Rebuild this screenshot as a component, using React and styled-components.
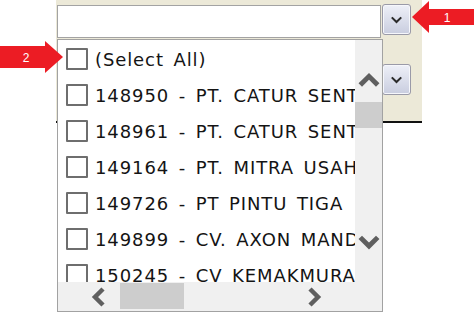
import React from 'react'
import styled, { createGlobalStyle } from 'styled-components'

const GlobalStyle = createGlobalStyle`
  html, body { margin: 0; padding: 0; background: #fff; }
  body { width: 474px; height: 318px; overflow: hidden; font-family: "DejaVu Sans", Verdana, sans-serif; }
`;

const items = [
    '(Select All)',
    '148950 - PT. CATUR SENTOSA',
    '148961 - PT. CATUR SENTOSA',
    '149164 - PT. MITRA USAHA',
    '149726 - PT PINTU TIGA',
    '149899 - CV. AXON MANDIRI',
    '150245 - CV KEMAKMURAN',
];

function Chevron({ dir = 'down', size = 22, color = '#5f5f5f', width = 4 }) {
    const pts = {
        down: '3,4 11,12 19,4',
        up: '3,12 11,4 19,12',
        left: '12,3 4,11 12,19',
        right: '4,3 12,11 4,19',
    }[dir];
    const vertical = dir === 'up' || dir === 'down';
    return (
        <svg width={vertical ? size : size * 16 / 22}
            height={vertical ? size * 16 / 22 : size}
            viewBox={vertical ? '0 0 22 16' : '0 0 16 22'}>
            <polyline points={pts} fill="none" stroke={color} strokeWidth={width} strokeLinejoin="miter" />
        </svg>
    );
}

function RedArrow({ dir, label }) {
    if (dir === 'left') {
        return (
            <ArrowOne width="62" height="33" viewBox="0 0 62 33">
                <polygon points="0,16 17,0 17,8 62,8 62,24 17,24 17,32" fill="#ec1c24" />
                <text x="35" y="21" fill="#fff" fontSize="12" fontFamily="Liberation Sans, sans-serif" textAnchor="middle">{label}</text>
            </ArrowOne>
        );
    }
    return (
        <ArrowTwo width="64" height="33" viewBox="0 0 64 33">
            <polygon points="0,5 45,5 45,0 63,16 45,32 45,27 0,27" fill="#ec1c24" />
            <text x="26" y="21" fill="#fff" fontSize="12" fontFamily="Liberation Sans, sans-serif" textAnchor="middle">{label}</text>
        </ArrowTwo>
    );
}

export default function App() {
    return (
        <Page>
            <GlobalStyle />
            <Panel>
                <FieldRow>
                    <TextBox />
                    <DropButton><Chevron dir="down" size={13} color="#2b2b2b" width={3.5} /></DropButton>
                </FieldRow>
                <FieldRow>
                    <TextBox />
                    <DropButton><Chevron dir="down" size={13} color="#2b2b2b" width={3.5} /></DropButton>
                </FieldRow>
            </Panel>

            <ListPopup>
                <ListBody>
                    <ListContent>
                        {items.map((item, i) => (
                            <ListItem key={i}>
                                <CheckBox />
                                <ItemText>{item}</ItemText>
                            </ListItem>
                        ))}
                    </ListContent>
                    <VScroll>
                        <ScrollButton $vertical><Chevron dir="up" size={24} width={4.5} /></ScrollButton>
                        <VThumb />
                        <Track />
                        <ScrollButton $vertical><Chevron dir="down" size={24} width={4.5} /></ScrollButton>
                    </VScroll>
                </ListBody>
                <HScroll>
                    <ScrollButton><Chevron dir="left" size={22} width={4.5} /></ScrollButton>
                    <HThumb />
                    <Track />
                    <ScrollButton><Chevron dir="right" size={22} width={4.5} /></ScrollButton>
                </HScroll>
            </ListPopup>

            <RedArrow dir="left" label="1" />
            <RedArrow dir="right" label="2" />
        </Page>
    )
}

const Page = styled.div`
position: relative;
width: 474px;
height: 318px;
`;

const Panel = styled.div`
margin-left: 56px;
width: 366px;
height: 123px;
box-sizing: border-box;
padding: 4px 0 0 1px;
background: #ece9d8;
border-bottom: 2px solid #111;
display: flex;
flex-direction: column;
gap: 26px;
`;

const FieldRow = styled.div`
display: flex;
align-items: flex-start;
gap: 1px;
`;

const TextBox = styled.div`
margin-top: 1px;
width: 324px;
height: 33px;
box-sizing: border-box;
background: #fff;
border: 1px solid #a3a3a3;
`;

const DropButton = styled.div`
width: 29px;
height: 31px;
box-sizing: border-box;
border: 1px solid #9a9aa8;
border-radius: 3px;
background: linear-gradient(#eef0f8, #c9cddf);
display: flex;
align-items: center;
justify-content: center;
box-shadow: inset 0 0 0 1px #f6f7fb;
`;

const ListPopup = styled.div`
position: absolute;
left: 57px;
top: 39px;
width: 326px;
height: 273px;
box-sizing: border-box;
border: 1px solid #a2a2a2;
background: #fff;
display: flex;
flex-direction: column;
`;

const ListBody = styled.div`
flex: 1;
display: flex;
min-height: 0;
`;

const ListContent = styled.div`
flex: 1;
overflow: hidden;
padding: 1px 0 0 8px;
`;

const ListItem = styled.div`
height: 36px;
display: flex;
align-items: center;
gap: 7px;
white-space: nowrap;
`;

const CheckBox = styled.span`
flex: none;
width: 22px;
height: 22px;
box-sizing: border-box;
border: 2px solid #6e6e6e;
border-radius: 1px;
background: #fff;
`;

const ItemText = styled.span`
font-family: "DejaVu Sans", Verdana, sans-serif;
font-size: 18px;
letter-spacing: 0.9px;
word-spacing: 3px;
color: #141414;
`;

const VScroll = styled.div`
width: 27px;
flex: none;
background: #f0f0f0;
display: flex;
flex-direction: column;
padding: 22px 0 21px;
box-sizing: border-box;
`;

const ScrollButton = styled.div`
flex: none;
display: flex;
align-items: center;
justify-content: center;
${p => p.$vertical ? 'height: 38px;' : 'width: 38px;'}
`;

const VThumb = styled.div`
flex: none;
height: 26px;
margin-top: 2px;
background: #cdcdcd;
`;

const Track = styled.div`
flex: 1;
`;

const HScroll = styled.div`
height: 29px;
flex: none;
background: #f0f0f0;
display: flex;
padding: 0 49px 0 22px;
`;

const HThumb = styled.div`
flex: none;
width: 64px;
margin: 1px 0 2px 2px;
background: #cdcdcd;
`;

const ArrowOne = styled.svg`
position: absolute;
left: 412px;
top: 1px;
`;

const ArrowTwo = styled.svg`
position: absolute;
left: 0;
top: 41px;
`;
